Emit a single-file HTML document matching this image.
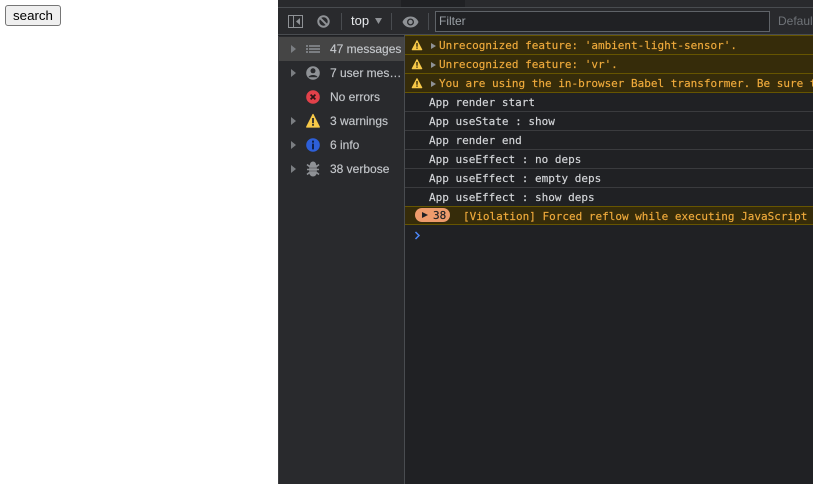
<!DOCTYPE html>
<html><head><meta charset="utf-8"><style>
*{box-sizing:border-box}
html,body{margin:0;padding:0;width:813px;height:484px;overflow:hidden;background:#fff}
body{position:relative;font-family:"Liberation Sans",sans-serif}
button{position:absolute;left:5px;top:5px;width:56px;height:21px;padding:0;border:1px solid #767676;border-radius:3px;background:#efefef;font:13.3px "Liberation Sans",sans-serif;color:#000;filter:blur(.25px)}
#dt{position:absolute;left:278px;top:0;width:535px;height:484px;background:#202124;overflow:hidden;filter:blur(.25px)}
#tabs{position:absolute;left:0;top:0;width:535px;height:7px;background:#292a2d}
#tabs i{position:absolute;left:123px;top:0;width:64px;height:7px;background:#202124}
#sep{position:absolute;left:0;top:7px;width:535px;height:1px;background:#494c50}
#bar{position:absolute;left:0;top:8px;width:535px;height:27px;background:#292a2d;border-bottom:1px solid #494c50}
.vs{position:absolute;top:13px;width:1px;height:17px;background:#494c50}
#filter{position:absolute;left:157px;top:11px;width:335px;height:21px;background:#202124;border:1px solid #5f6368;color:#9aa0a6;font-size:12px;line-height:19px;padding-left:3px}
#def{position:absolute;left:500px;top:13px;color:#6f7378;font-size:12px;line-height:16px;white-space:nowrap}
#top{position:absolute;left:73px;top:13px;color:#e8eaed;font-size:13px;line-height:16px}
#side{position:absolute;left:0;top:36px;width:126px;height:448px;background:#292a2d;border-left:1px solid #3c3d40}
#div{position:absolute;left:126px;top:35px;width:1px;height:449px;background:#494c50}
.s{position:absolute;left:0;width:125px;height:24px;color:#c4c7cb;font-size:12px;line-height:24px;white-space:nowrap;-webkit-text-stroke:.15px #c4c7cb}
.s b{position:absolute;left:51px;top:0;font-weight:400}
.s svg{position:absolute;left:0;top:0}
.tri{position:absolute;left:12px;top:8px;width:0;height:0;border-left:5px solid #7b7e82;border-top:4px solid transparent;border-bottom:4px solid transparent}
#log{position:absolute;left:127px;top:35px;width:408px;height:449px;font:11px "DejaVu Sans Mono","Liberation Mono",monospace;-webkit-text-stroke:.15px currentColor}
.r{position:absolute;left:0;width:408px;height:19px;line-height:18px;white-space:pre;overflow:hidden;color:#d5d7da;border-bottom:1px solid #3a3b3e}
.r span{position:absolute;left:24px;top:1px}
.w{background:#362c0a;color:#f0ab3c;border-bottom:1px solid #665500}
.w span{left:34px}
.w svg{position:absolute;left:6px;top:3px}
.w .t{position:absolute;left:26px;top:7px;width:0;height:0;border-left:5px solid #8f9296;border-top:3.5px solid transparent;border-bottom:3.5px solid transparent}
#badge{position:absolute;left:10px;top:1px;width:35px;height:14px;border-radius:7px;background:#ee9b6c;color:#202124}
#badge u{position:absolute;left:7px;top:4px;width:0;height:0;border-left:6px solid #202124;border-top:3.5px solid transparent;border-bottom:3.5px solid transparent}
#badge em{position:absolute;left:18px;top:0;font-style:normal;font-weight:400;line-height:16px}
</style></head><body>
<button>search</button>
<div id="dt">
<div id="tabs"><i></i></div><div id="sep"></div>
<div id="bar"></div>
<svg style="position:absolute;left:10px;top:15px" width="15" height="13" viewBox="0 0 15 13"><rect x=".5" y=".5" width="14" height="12" fill="none" stroke="#8f9296"/><path d="M5.500 0v13" stroke="#8f9296"/><path d="M12 3v7L8 6.500z" fill="#8f9296"/></svg>
<svg style="position:absolute;left:39px;top:15px" width="13" height="13" viewBox="0 0 13 13"><circle cx="6.500" cy="6.500" r="5.200" fill="none" stroke="#8f9296" stroke-width="2"/><path d="M2.800 2.800l7.400 7.400" stroke="#8f9296" stroke-width="2"/></svg>
<div class="vs" style="left:63px"></div>
<div id="top">top</div>
<svg style="position:absolute;left:97px;top:18px" width="7" height="6" viewBox="0 0 7 6"><path d="M0 0h7L3.500 6z" fill="#8f9296"/></svg>
<div class="vs" style="left:113px"></div>
<svg style="position:absolute;left:124px;top:16px" width="17" height="12" viewBox="0 0 17 12"><path fill-rule="evenodd" d="M8.500 .5C4.800 .5 1.700 2.800.5 6c1.200 3.200 4.300 5.500 8 5.500s6.800-2.300 8-5.500c-1.200-3.200-4.300-5.500-8-5.500zm0 9a3.500 3.500 0 1 1 0-7 3.500 3.500 0 0 1 0 7z" fill="#8f9296"/><circle cx="8.500" cy="6" r="2.200" fill="#8f9296"/></svg>
<div class="vs" style="left:150px"></div>
<div id="filter">Filter</div>
<div id="def">Default</div>

<div id="side">
<div class="s" style="top:1px;background:#454545"><div class="tri"></div>
<svg width="44" height="24"><path d="M27 8h2v2h-2zM27 11h2v2h-2zM27 14h2v2h-2zM30 8h11v2H30zM30 11h11v2H30zM30 14h11v2H30z" fill="#7b7e82"/></svg><b>47 messages</b></div>
<div class="s" style="top:25px"><div class="tri"></div>
<svg width="44" height="24"><circle cx="34" cy="12" r="6.800" fill="#8f9296"/><circle cx="34" cy="9.800" r="2.500" fill="#292a2d"/><path d="M29.500 16.300c.6-3 8.400-3 9 0z" fill="#292a2d"/></svg><b>7 user mes…</b></div>
<div class="s" style="top:49px">
<svg width="44" height="24"><circle cx="34" cy="12" r="6.800" fill="#e2414a"/><path d="M31.600 9.600l4.800 4.800M36.400 9.600l-4.800 4.800" stroke="#2a1517" stroke-width="1.700"/></svg><b>No errors</b></div>
<div class="s" style="top:73px"><div class="tri"></div>
<svg width="44" height="24"><path d="M34 5.500l6.300 12.500H27.700z" fill="#f7c948" stroke="#f7c948" stroke-width="1.300" stroke-linejoin="round"/><path d="M33.100 9h1.800v5.200h-1.800zM33.100 15h1.800v1.800h-1.800z" fill="#292a2d"/></svg><b>3 warnings</b></div>
<div class="s" style="top:97px"><div class="tri"></div>
<svg width="44" height="24"><circle cx="34" cy="12" r="6.800" fill="#2d5fd8"/><path d="M33 7.600h2v2h-2zM33 10.600h2v5.800h-2z" fill="#10214a"/></svg><b>6 info</b></div>
<div class="s" style="top:121px"><div class="tri"></div>
<svg width="44" height="24"><path d="M31 7.500a3 3 0 0 1 6 0l.8 1.200v7a3.800 3.800 0 0 1-7.600 0v-7z" fill="#8f9296"/><path d="M28 7.500l2.500 2M40 7.500l-2.500 2M28 12.500h3M40 12.500h-3M28 17.500l2.500-2M40 17.500l-2.500-2" stroke="#8f9296" stroke-width="1.500"/><path d="M30 11h8M30 14h8" stroke="#5c5e61" stroke-width=".8"/></svg><b>38 verbose</b></div>
</div>
<div id="div"></div>

<div id="log">
<div class="r w" style="top:0;height:20px;border-top:1px solid #665500"><svg width="13" height="12" viewBox="0 0 13 12"><path d="M6 1.800l4.700 8.800H1.300z" fill="#f7c948" stroke="#f7c948" stroke-width="1.200" stroke-linejoin="round"/><path d="M5.300 4h1.400v3.800H5.300zM5.300 8.500h1.400v1.300H5.300z" fill="#362c0a"/></svg><div class="t"></div><span>Unrecognized feature: 'ambient-light-sensor'.</span></div>
<div class="r w" style="top:20px"><svg width="13" height="12" viewBox="0 0 13 12"><path d="M6 1.800l4.700 8.800H1.300z" fill="#f7c948" stroke="#f7c948" stroke-width="1.200" stroke-linejoin="round"/><path d="M5.300 4h1.400v3.800H5.300zM5.300 8.500h1.400v1.300H5.300z" fill="#362c0a"/></svg><div class="t"></div><span>Unrecognized feature: 'vr'.</span></div>
<div class="r w" style="top:39px"><svg width="13" height="12" viewBox="0 0 13 12"><path d="M6 1.800l4.700 8.800H1.300z" fill="#f7c948" stroke="#f7c948" stroke-width="1.200" stroke-linejoin="round"/><path d="M5.300 4h1.400v3.800H5.300zM5.300 8.500h1.400v1.300H5.300z" fill="#362c0a"/></svg><div class="t"></div><span>You are using the in-browser Babel transformer. Be sure to precompile</span></div>
<div class="r" style="top:58px"><span>App render start</span></div>
<div class="r" style="top:77px"><span>App useState : show</span></div>
<div class="r" style="top:96px"><span>App render end</span></div>
<div class="r" style="top:115px"><span>App useEffect : no deps</span></div>
<div class="r" style="top:134px"><span>App useEffect : empty deps</span></div>
<div class="r" style="top:153px;height:18px;border-bottom:0"><span>App useEffect : show deps</span></div>
<div class="r w" style="top:171px;border-top:1px solid #665500;height:19px"><div id="badge"><u></u><em>38</em></div><span style="left:58px">[Violation] Forced reflow while executing JavaScript took 30ms</span></div>
<svg style="position:absolute;left:9px;top:196px" width="7" height="9" viewBox="0 0 7 9"><path d="M1.500 1l3.500 3.500L1.500 8" fill="none" stroke="#4d86f7" stroke-width="1.500"/></svg>
</div>
</div>
</body></html>
